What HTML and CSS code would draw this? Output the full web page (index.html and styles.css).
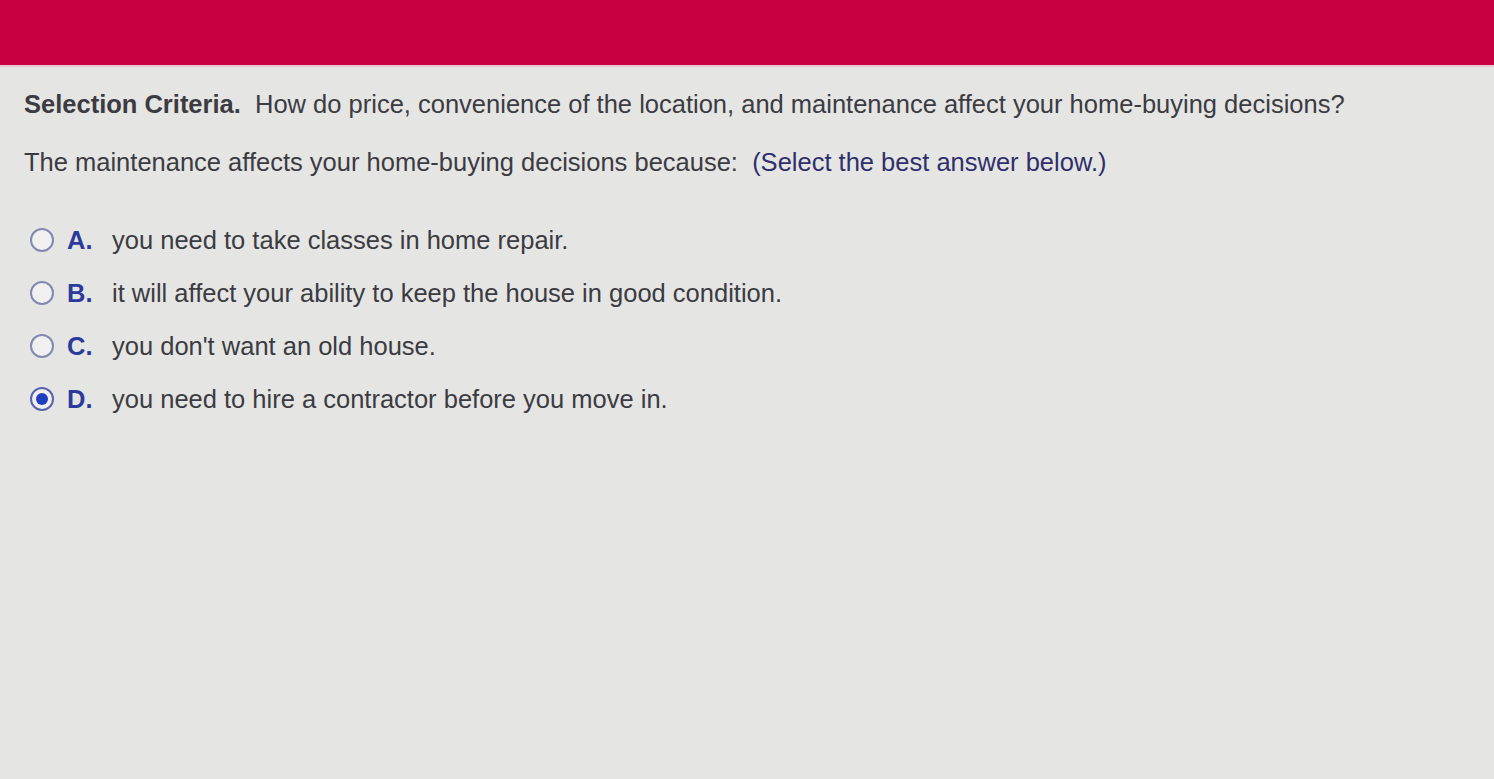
FILE: index.html
```html
<!DOCTYPE html>
<html>
<head>
<meta charset="utf-8">
<link rel="stylesheet" href="styles.css">
</head>
<body>
<div class="topbar"></div>
<main class="content">
  <p class="question"><span class="title">Selection Criteria.</span>&nbsp; How do price, convenience of the location, and maintenance affect your home-buying decisions?</p>
  <p class="prompt">The maintenance affects your home-buying decisions because:&nbsp; <span class="hint">(Select the best answer below.)</span></p>
  <ul class="options">
    <li class="option"><span class="radio"></span><span class="letter">A.</span><span class="text">you need to take classes in home repair.</span></li>
    <li class="option"><span class="radio"></span><span class="letter">B.</span><span class="text">it will affect your ability to keep the house in good condition.</span></li>
    <li class="option"><span class="radio"></span><span class="letter">C.</span><span class="text">you don't want an old house.</span></li>
    <li class="option"><span class="radio checked"></span><span class="letter">D.</span><span class="text">you need to hire a contractor before you move in.</span></li>
  </ul>
</main>
</body>
</html>
```
FILE: styles.css
```css
html, body {
  margin: 0;
  padding: 0;
}
body {
  background: #e5e5e3;
  font-family: "Liberation Sans", Arial, sans-serif;
  color: #3b3b42;
  width: 1494px;
  height: 779px;
  overflow: hidden;
}
.topbar {
  height: 65px;
  background: #c9003f;
  border-bottom: 2px solid #e8c8d0;
}
.content {
  padding: 22px 0 0 24px;
}
.question {
  margin: 0;
  font-size: 25.5px;
  line-height: 30px;
}
.title {
  font-weight: bold;
}
.prompt {
  margin: 28px 0 0 0;
  font-size: 25.5px;
  line-height: 30px;
}
.hint {
  color: #2f2f6c;
}
.options {
  list-style: none;
  margin: 48px 0 0 0;
  padding: 0;
  display: flex;
  flex-direction: column;
  gap: 23px;
}
.option {
  display: flex;
  align-items: center;
  font-size: 25.5px;
  line-height: 30px;
}
.radio {
  width: 24px;
  height: 24px;
  border: 2px solid #8288b0;
  border-radius: 50%;
  background: #f0f0f0;
  box-sizing: border-box;
  margin-left: 6px;
  position: relative;
}
.radio.checked {
  border-color: #5a63b0;
}
.radio.checked::after {
  content: "";
  position: absolute;
  left: 4px;
  top: 4px;
  width: 12px;
  height: 12px;
  border-radius: 50%;
  background: #1f3fc0;
}
.letter {
  color: #2c3a9c;
  font-weight: bold;
  margin-left: 13px;
  width: 45px;
}
.text {
  color: #3b3b42;
}
```
